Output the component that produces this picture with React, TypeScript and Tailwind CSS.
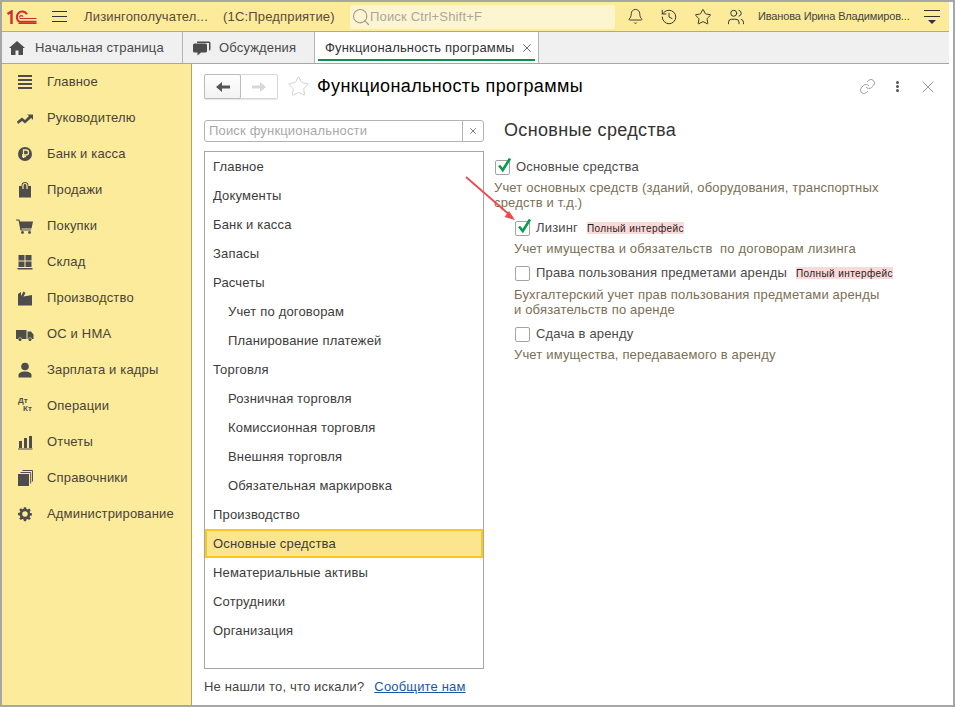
import React from "react";
import { Bell, History, Star, Users, Link, Search, X } from "lucide-react";

const G = "#4d4d4d";

const Ic = ({ children }: { children: React.ReactNode }) => (
  <svg width="18" height="18" viewBox="0 0 18 18" fill={G} className="shrink-0">{children}</svg>
);

const sideIcons: React.ReactNode[] = [
  <Ic><path d="M2 2h14v2H2zM2 6h14v2H2zM2 10h14v2H2zM2 14h14v2H2z" /></Ic>,
  <Ic><path d="M1 12.500l5-4 3 2.500 4-4-2-1.500h6v5.500l-1.800-2-6.200 5.500-3-2.500-4 3z" /></Ic>,
  <Ic><circle cx="9" cy="9" r="7" /><path d="M7.500 13V5h2.500a2.300 2.300 0 010 5H6M6 11.700h4" stroke="#fdeb9b" strokeWidth="1.300" fill="none" /></Ic>,
  <Ic><path d="M3 5h2.500v-.5a3.500 3.500 0 017 0V5H15v11.500H3z" /><path d="M7 8V4.500a2 2 0 014 0V8" stroke="#fdeb9b" strokeWidth="1.200" fill="none" /></Ic>,
  <Ic><path d="M0 2.500h3.500l.5 2H17l-1.500 7H5.500l.2 1H15v1H4.500L2.500 3.500H0z" /><circle cx="6.500" cy="15.500" r="1.400" /><circle cx="13.500" cy="15.500" r="1.400" /></Ic>,
  <Ic><path d="M2.500 2h6v5.500h-6zM9.500 2h6v5.500h-6zM2.500 8.500h6V14h-6zM9.500 8.500h6V14h-6zM1.500 15h15v1.500h-15z" /></Ic>,
  <Ic><path d="M2 16.500V5l3-2v4l2.500-4.500 2 1.500-2 3.500L16 6v10.500z" /></Ic>,
  <Ic><path d="M0 5h10.500v9H6a2 2 0 00-3.800 0H0zM11.500 6.500H15l2.500 3V14h-1.600a2 2 0 00-3.800 0h-.6z" /><circle cx="4" cy="14.500" r="1.500" /><circle cx="14" cy="14.500" r="1.500" /></Ic>,
  <Ic><circle cx="9" cy="5.500" r="3.800" /><path d="M2.500 16.500v-2.500c0-2 3-3.500 6.500-3.500s6.500 1.500 6.500 3.500v2.500z" /></Ic>,
  <span className="w-[18px] h-[18px] relative block shrink-0 text-[#4d4d4d] font-bold text-[8px] leading-[8px] tracking-normal">
    <span className="absolute left-[2px] top-[0px]">Дт</span>
    <span className="absolute left-[7px] top-[8px]">Кт</span>
  </span>,
  <Ic><path d="M3 8h3v7H3zM8 5h3v10H8zM13 3h3v12h-3zM2 15.500h14.500v1H2z" /></Ic>,
  <Ic><path d="M2 5h11v12H2z" /><path d="M4.500 3.500h10.200V14.500M6.500 1.500h10v11" stroke={G} strokeWidth="1" fill="none" /></Ic>,
  <Ic>
    <g transform="translate(1.800 1.800) scale(.8)">
      <path fillRule="evenodd" d="M7.600 1h2.800l.4 2.300 1.400.6 2-1.300 2 2-1.400 2 .6 1.400 2.300.4v2.800l-2.300.4-.6 1.400 1.400 2-2 2-2-1.400-1.400.6-.4 2.300H7.600l-.4-2.300-1.400-.6-2 1.400-2-2 1.400-2-.6-1.400L.3 10.800V8l2.300-.4.6-1.400-1.400-2 2-2 2 1.300 1.400-.6zM9 6a3.400 3.400 0 100 6.800A3.400 3.400 0 009 6z" transform="translate(0 -.4)" />
    </g>
  </Ic>,
];

const sideItems = ["Главное", "Руководителю", "Банк и касса", "Продажи", "Покупки", "Склад", "Производство", "ОС и НМА", "Зарплата и кадры", "Операции", "Отчеты", "Справочники", "Администрирование"];

const listItems: [string, boolean][] = [
  ["Главное", false], ["Документы", false], ["Банк и касса", false], ["Запасы", false], ["Расчеты", false],
  ["Учет по договорам", true], ["Планирование платежей", true], ["Торговля", false], ["Розничная торговля", true],
  ["Комиссионная торговля", true], ["Внешняя торговля", true], ["Обязательная маркировка", true], ["Производство", false],
];
const listItems2 = ["Нематериальные активы", "Сотрудники", "Организация"];

const Row = ({ text, sub }: { text: string; sub: boolean }) => (
  <div className={`h-[29px] flex items-center text-[#3c3c3c] ${sub ? "pl-[23px]" : "pl-2"}`}>{text}</div>
);

const Check = ({ on }: { on?: boolean }) => (
  <span className="relative block w-[15px] h-[15px] ml-[1px] border border-[#a3a3a3] rounded-[2px] bg-white shrink-0">
    {on && (
      <svg width="18" height="18" viewBox="0 0 18 18" className="absolute left-[0px] top-[-5px]">
        <path d="M3 9.500l3.800 4.500 7.200-11.500" stroke="#0e9a4f" strokeWidth="2.600" fill="none" />
      </svg>
    )}
  </span>
);

const Badge = () => (
  <span className="bg-[#fcd9d9] text-[#222] text-[10px] tracking-[0.4px] leading-[13px] h-[12px] flex items-center">Полный интерфейс</span>
);

export default function App() {
  return (
    <div
      className="w-[955px] h-[707px] border-2 border-[#a6a6a6] bg-white flex flex-col relative overflow-hidden text-[13px] tracking-[0.17px] text-[#4a4a4a]"
      style={{ fontFamily: '"Liberation Sans", Arial, sans-serif' }}
    >
      {/* header */}
      <div className="w-[947px] h-[30px] shrink-0 bg-[#fbeb9b] border-b border-[#b9ab6d] flex items-center text-[#4a4a4a]">
        <svg width="30" height="14" viewBox="0 0 30 14" className="ml-[5px] shrink-0" fill="none" stroke="#d32a2f">
          <path d="M0.500 4L4.500 1.500V14" strokeWidth="2.400" />
          <path d="M20 4.200A5.500 5.500 0 1012.500 11.800H29.500" strokeWidth="2" />
          <path d="M12.500 7.500A1.800 1.800 0 0116 6.800M12.700 8.500H29.500" strokeWidth="1.200" />
          <path d="M11.500 13.400H29.500" strokeWidth="1.200" />
        </svg>
        <span className="ml-[15px] w-[15px] shrink-0 flex flex-col gap-[4px]">
          <span className="block h-[1px] bg-[#333]" />
          <span className="block h-[1px] bg-[#333]" />
          <span className="block h-[1px] bg-[#333]" />
        </span>
        <span className="ml-[17px] w-[139px] shrink-0 text-[#5a4a3a] whitespace-nowrap">Лизингополучател...</span>
        <span className="whitespace-nowrap w-[127px] shrink-0 text-[#5a4a3a]">(1С:Предприятие)</span>
        <div className="w-[265px] h-[24px] bg-[#fdf5d0] rounded-[2px] flex items-center shrink-0 text-[#a8a8a0]">
          <Search size={20} strokeWidth={1.300} className="ml-[1px] text-[#9a9a8a] shrink-0" />
          <span className="-ml-[1px] whitespace-nowrap">Поиск Ctrl+Shift+F</span>
        </div>
        <Bell size={17} strokeWidth={1.300} className="ml-[12px] text-[#333] shrink-0" />
        <History size={18} strokeWidth={1.300} className="ml-[16px] text-[#333] shrink-0" />
        <Star size={18} strokeWidth={1.300} className="ml-[16px] text-[#333] shrink-0" />
        <Users size={18} strokeWidth={1.300} className="ml-[15px] text-[#333] shrink-0" />
        <span className="ml-[13px] text-[11px] tracking-[-0.15px] w-[157px] shrink-0 whitespace-nowrap text-[#444]">Иванова Ирина Владимиров...</span>
        <span className="ml-[9px] w-[16px] shrink-0 flex flex-col items-center gap-[5px]">
          <span className="block h-[1px] w-full bg-[#333]" />
          <span className="block h-[1px] w-full bg-[#333]" />
          <span className="block w-0 h-0 border-x-[4px] border-x-transparent border-t-[4px] border-t-[#333] -mt-[2px]" />
        </span>
      </div>

      {/* tabs */}
      <div className="w-[947px] h-[32px] shrink-0 bg-[#f0f0f0] border-b border-[#a6a6a6] flex">
        <div className="w-[181px] shrink-0 flex items-center border-r border-[#b5b5b5]">
          <svg width="16" height="14" viewBox="0 0 16 14" fill={G} className="ml-[7px] shrink-0">
            <path d="M8 0l8 7h-2v7H9.500V9.500h-3V14H2V7H0z" />
          </svg>
          <span className="ml-[10px] whitespace-nowrap text-[#4a4a4a]">Начальная страница</span>
        </div>
        <div className="w-[132px] shrink-0 flex items-center border-r border-[#b5b5b5]">
          <svg width="18" height="16" viewBox="0 0 18 16" fill={G} className="ml-[10px] shrink-0">
            <path d="M4 1.500h12a1.500 1.500 0 011.500 1.500v6a1.500 1.500 0 01-1.500 1.500V3H4z" />
            <path d="M1.500 3.500h11a1.500 1.500 0 011.500 1.500v6a1.500 1.500 0 01-1.500 1.500H8L4.500 15.500V12.500h-3A1.500 1.500 0 010 11V5a1.500 1.500 0 011.500-1.500z" />
          </svg>
          <span className="ml-[8px] whitespace-nowrap text-[#4a4a4a]">Обсуждения</span>
        </div>
        <div className="w-[224px] shrink-0 bg-white border-r border-[#b5b5b5] flex items-center relative">
          <span className="ml-[10px] whitespace-nowrap text-[#333]">Функциональность программы</span>
          <X size={14} strokeWidth={1.300} className="ml-[5px] text-[#444] shrink-0" />
          <span className="absolute left-[3px] right-[3px] bottom-[2px] h-[2px] bg-[#0e8f4a]" />
        </div>
      </div>

      {/* body */}
      <div className="flex flex-1 min-h-0">
        <div className="w-[190px] shrink-0 bg-[#fbeb9b] border-r border-[#b0a368] flex flex-col">
          {sideItems.map((t, i) => (
            <div key={t} className="h-[36px] shrink-0 flex items-center pl-[14px] text-[#4a4336]">
              <span className="w-[18px] shrink-0 flex">{sideIcons[i]}</span>
              <span className="ml-[13px] whitespace-nowrap">{t}</span>
            </div>
          ))}
        </div>

        <div className="flex-1 min-w-0 flex flex-col pl-[12px] pr-[18px]">
          {/* title row */}
          <div className="h-[44px] shrink-0 flex items-center relative pt-[1px]">
            <div className="flex w-[74px] h-[25px] rounded-[2px] border border-[#d8d8d8] shrink-0 bg-white shadow-[0_1px_1px_rgba(0,0,0,0.1)]">
              <span className="w-[37px] rounded-[2px] border border-[#bdbdbd] -m-[1px] bg-gradient-to-b from-white to-[#f2f2f2] flex items-center justify-center">
                <svg width="14" height="10" viewBox="0 0 14 10" fill="#555"><path d="M0 5l6-5v3.500h8v3H6V10z" /></svg>
              </span>
              <span className="flex-1 flex items-center justify-center ml-[1px]">
                <svg width="14" height="10" viewBox="0 0 14 10" fill="#d8d8d8"><path d="M14 5L8 0v3.500H0v3h8V10z" /></svg>
              </span>
            </div>
            <Star size={23} strokeWidth={0.900} className="ml-[9px] text-[#c9c9c9] shrink-0" />
            <span className="ml-[7px] text-[18px] tracking-[0.37px] text-black whitespace-nowrap">Функциональность программы</span>
            <div className="ml-auto -mr-[3px] flex items-center">
              <Link size={17} strokeWidth={1.100} className="text-[#8a8a8a]" />
              <span className="ml-[20px] flex flex-col gap-[1px]">
                <span className="block w-[3px] h-[3px] rounded-full bg-[#555]" />
                <span className="block w-[3px] h-[3px] rounded-full bg-[#555]" />
                <span className="block w-[3px] h-[3px] rounded-full bg-[#555]" />
              </span>
              <X size={20} strokeWidth={0.900} className="ml-[19px] text-[#777]" />
            </div>
          </div>

          <div className="flex flex-1 min-h-0">
            {/* left column */}
            <div className="w-[280px] shrink-0 flex flex-col">
              <div className="mt-[12px] h-[22px] shrink-0 border border-[#b3b3b3] rounded-[3px] flex items-center">
                <span className="flex-1 pl-[4px] text-[#a9a9a9]">Поиск функциональности</span>
                <span className="w-[21px] h-full border-l border-[#b3b3b3] flex items-center justify-center">
                  <X size={10} strokeWidth={1.800} className="text-[#555]" />
                </span>
              </div>
              <div className="mt-[9px] h-[518px] shrink-0 border border-[#a6a6a6] flex flex-col">
                {listItems.map(([t, s]) => <Row key={t} text={t} sub={s} />)}
                <div className="h-[29px] shrink-0 border-2 border-[#fbc71e] bg-[#fbe58e] flex items-center pl-[6px] text-[#3c3c3c]">Основные средства</div>
                {listItems2.map((t) => <Row key={t} text={t} sub={false} />)}
              </div>
              <div className="mt-[8px] flex whitespace-nowrap text-[#444]">
                <span>Не нашли то, что искали?</span>
                <span className="ml-[10px] text-[#1c56a8] underline">Сообщите нам</span>
              </div>
            </div>

            {/* right column */}
            <div className="flex-1 min-w-0 pl-[10px]">
              <div className="ml-[10px] mt-[10px] h-[24px] text-[18px] tracking-[0.35px] leading-[24px] text-[#333]">Основные средства</div>
              <div className="mt-[17px] flex items-center h-[16px]">
                <Check on />
                <span className="ml-[6px]">Основные средства</span>
              </div>
              <div className="mt-[5px] w-[400px] leading-[15px] text-[#7a6f55]">Учет основных средств (зданий, оборудования, транспортных средств и т.д.)</div>

              <div className="ml-[20px] mt-[10px]">
                <div className="flex items-center h-[16px]">
                  <Check on />
                  <span className="ml-[6px]">Лизинг</span>
                  <span className="ml-[9px]"><Badge /></span>
                </div>
                <div className="mt-[5px] leading-[15px] text-[#7a6f55] whitespace-pre">Учет имущества и обязательств  по договорам лизинга</div>

                <div className="mt-[9px] flex items-center h-[16px]">
                  <Check />
                  <span className="ml-[6px]">Права пользования предметами аренды</span>
                  <span className="ml-[9px]"><Badge /></span>
                </div>
                <div className="mt-[6px] w-[370px] leading-[15px] text-[#7a6f55]">Бухгалтерский учет прав пользования предметами аренды и обязательств по аренде</div>

                <div className="mt-[9px] flex items-center h-[16px]">
                  <Check />
                  <span className="ml-[6px]">Сдача в аренду</span>
                </div>
                <div className="mt-[5px] leading-[15px] text-[#7a6f55]">Учет имущества, передаваемого в аренду</div>
              </div>
            </div>
          </div>
        </div>
      </div>

      {/* annotation arrow */}
      <svg width="60" height="60" viewBox="0 0 60 60" className="absolute left-[461px] top-[170px]" fill="none">
        <path d="M3 5L49 45" stroke="#f0484f" strokeWidth="1.800" />
        <path d="M52 48l-10.500-3 4.500-6z" fill="#f0484f" />
      </svg>
    </div>
  );
}
